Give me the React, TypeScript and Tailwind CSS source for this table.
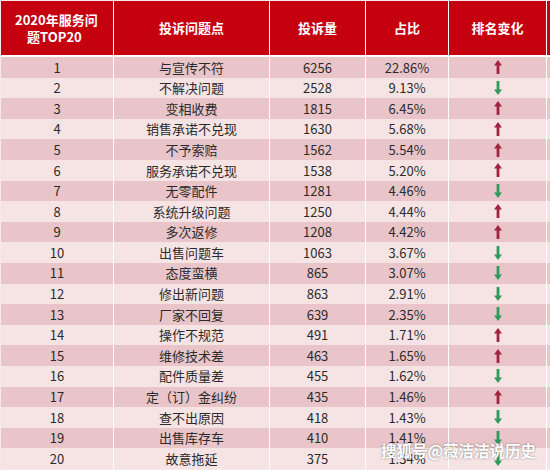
import React from "react";

type Row = { name: string; count: number; pct: string; up: boolean };

const rows: Row[] = [
  { name: "与宣传不符", count: 6256, pct: "22.86%", up: true },
  { name: "不解决问题", count: 2528, pct: "9.13%", up: false },
  { name: "变相收费", count: 1815, pct: "6.45%", up: true },
  { name: "销售承诺不兑现", count: 1630, pct: "5.68%", up: true },
  { name: "不予索赔", count: 1562, pct: "5.54%", up: true },
  { name: "服务承诺不兑现", count: 1538, pct: "5.20%", up: true },
  { name: "无零配件", count: 1281, pct: "4.46%", up: false },
  { name: "系统升级问题", count: 1250, pct: "4.44%", up: true },
  { name: "多次返修", count: 1208, pct: "4.42%", up: true },
  { name: "出售问题车", count: 1063, pct: "3.67%", up: false },
  { name: "态度蛮横", count: 865, pct: "3.07%", up: false },
  { name: "修出新问题", count: 863, pct: "2.91%", up: false },
  { name: "厂家不回复", count: 639, pct: "2.35%", up: false },
  { name: "操作不规范", count: 491, pct: "1.71%", up: true },
  { name: "维修技术差", count: 463, pct: "1.65%", up: true },
  { name: "配件质量差", count: 455, pct: "1.62%", up: false },
  { name: "定（订）金纠纷", count: 435, pct: "1.46%", up: true },
  { name: "查不出原因", count: 418, pct: "1.43%", up: false },
  { name: "出售库存车", count: 410, pct: "1.41%", up: false },
  { name: "故意拖延", count: 375, pct: "1.34%", up: false },
];

const Arrow = ({ up }: { up: boolean }) => (
  <svg width="8" height="14" viewBox="0 0 8 14" className={up ? "" : "rotate-180"}>
    <polygon points="4,0 8,5.5 5.4,5.5 5.4,14 2.6,14 2.6,5.5 0,5.5" fill={up ? "#a3223f" : "#2f9a5c"} />
  </svg>
);

const cell = "flex items-center justify-center border-r border-white";

const App = () => {
  return (
    <div className="relative w-[550px] h-[470px] overflow-hidden bg-[#f7e9ea] pt-px pl-px font-['Microsoft_YaHei','Noto_Sans_CJK_SC',sans-serif] text-[13px] text-[#2b2b2b]">
      <div className="grid grid-cols-[113px_156px_96px_83px_98px] h-[56px] bg-[#c5000f] text-white font-bold border-b-2 border-white">
        <div className={cell}>
          <div className="w-[84px] text-left leading-[17px]">
            2020年服务问
            <br />
            <span className="pl-[12px]">题TOP20</span>
          </div>
        </div>
        <div className={cell}>投诉问题点</div>
        <div className={cell}>投诉量</div>
        <div className={cell}>占比</div>
        <div className={cell}>排名变化</div>
      </div>
      {rows.map((r, i) => (
        <div
          key={i}
          className={`grid grid-cols-[113px_156px_96px_83px_98px] h-[20.6px] ${
            i % 2 === 0 ? "bg-[#e9c5c9]" : "bg-[#f6e4e5]"
          }`}
        >
          <div className={cell}>{i + 1}</div>
          <div className={cell}>{r.name}</div>
          <div className={cell}>{r.count}</div>
          <div className={cell}>{r.pct}</div>
          <div className={cell}>
            <Arrow up={r.up} />
          </div>
        </div>
      ))}
      <div className="absolute left-[381px] top-[443px] whitespace-nowrap leading-none text-[15.5px] font-bold text-white [text-shadow:0_0_2px_rgba(0,0,0,0.5)]">
        搜狐号@薇洁洁说历史
      </div>
    </div>
  );
};

export default App;
